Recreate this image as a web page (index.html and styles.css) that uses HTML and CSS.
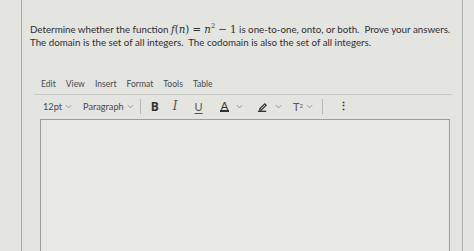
FILE: index.html
```html
<!DOCTYPE html>
<html>
<head>
<meta charset="utf-8">
<link rel="stylesheet" href="styles.css">
</head>
<body>
<div class="panel">
  <div class="question">
    <p>Determine whether the function <span class="math"><i>f</i>(<i>n</i>) = <i>n</i><sup>2</sup> − 1</span> is one-to-one, onto, or both.&nbsp; Prove your answers.</p>
    <p>The domain is the set of all integers.&nbsp; The codomain is also the set of all integers.</p>
  </div>
  <div class="menu">
    <span>Edit</span><span>View</span><span>Insert</span><span>Format</span><span>Tools</span><span>Table</span>
  </div>
  <div class="toolbar">
    <span class="drop size">12pt <svg class="chev" viewBox="0 0 8 5"><path d="M1 1l3 3 3-3"/></svg></span>
    <span class="drop para">Paragraph <svg class="chev" viewBox="0 0 8 5"><path d="M1 1l3 3 3-3"/></svg></span>
    <span class="vsep"></span>
    <span class="btn bold">B</span>
    <span class="btn ital">I</span>
    <span class="btn under">U</span>
    <span class="btn color"><span class="a">A</span><svg class="chev" viewBox="0 0 8 5"><path d="M1 1l3 3 3-3"/></svg></span>
    <span class="btn hl"><svg class="pen" viewBox="0 0 12 12"><path d="M3 8.5l5.5-5.5 1.5 1.5-5.5 5.5H3z" fill="none" stroke="#333" stroke-width="1.3"/><rect x="1" y="10.5" width="9" height="1.5" fill="#333"/></svg><svg class="chev" viewBox="0 0 8 5"><path d="M1 1l3 3 3-3"/></svg></span>
    <span class="btn sup">T<sup>2</sup><svg class="chev" viewBox="0 0 8 5"><path d="M1 1l3 3 3-3"/></svg></span>
    <span class="vsep"></span>
    <span class="btn more">⋮</span>
  </div>
  <div class="editor"></div>
</div>
</body>
</html>
```
FILE: styles.css
```css
html, body {
  margin: 0;
  padding: 0;
  height: 100%;
  overflow: hidden;
}
body {
  background: #e4e4e1;
  font-family: Lato, "Open Sans", sans-serif;
  color: #2f2f2f;
}
.panel {
  margin-left: 21px;
  width: 442px;
  height: 251px;
  border-left: 1px solid #a9a9a7;
  border-right: 1px solid #b3b3b1;
  box-sizing: border-box;
  display: flex;
  flex-direction: column;
}
.question {
  padding: 23px 0 0 8px;
  font-size: 9.75px;
  line-height: 13px;
  white-space: nowrap;
}
.question p {
  margin: 0;
  height: 13px;
}
.math {
  font-family: "DejaVu Serif", "Liberation Serif", serif;
  font-size: 10.2px;
}
.math sup {
  font-size: 6.5px;
  line-height: 0;
  vertical-align: 5px;
}
.menu {
  display: flex;
  gap: 10px;
  margin-top: 29px;
  padding-left: 19px;
  font-size: 8.6px;
  color: #4a4a4a;
  height: 13px;
  line-height: 13px;
}
.toolbar {
  margin-top: 3px;
  margin-left: 12px;
  margin-right: 10px;
  border-top: 1px solid #c9c9c6;
  height: 22px;
  display: flex;
  align-items: center;
  padding-left: 9px;
  font-size: 9.2px;
  color: #4a4a4a;
}
.chev {
  width: 7px;
  height: 5px;
  margin-left: 3px;
  fill: none;
  stroke: #8a8a8a;
  stroke-width: 1;
}
.drop {
  display: flex;
  align-items: center;
}
.size { margin-right: 11px; }
.para { margin-right: 6px; }
.vsep {
  width: 1px;
  height: 15px;
  background: #b8b8b5;
  margin: 0 10px 0 0;
}
.btn {
  display: flex;
  align-items: center;
  color: #333;
}
.bold {
  font-weight: 700;
  font-size: 12px;
  margin-right: 14px;
  font-family: "Open Sans", Lato, sans-serif;
}
.ital {
  font-family: "DejaVu Serif", serif;
  font-style: italic;
  font-size: 12px;
  color: #555;
  margin-right: 17px;
}
.under {
  text-decoration: underline;
  text-underline-offset: 2px;
  font-size: 11px;
  color: #555;
  margin-right: 17px;
}
.color .a {
  font-size: 11px;
  border-bottom: 2px solid #333;
  line-height: 9px;
  padding: 0 1px;
}
.color { margin-right: 14px; }
.color .chev, .hl .chev { margin-left: 7px; }
.pen { width: 11px; height: 11px; }
.hl { margin-right: 11px; }
.sup {
  font-size: 11px;
  color: #555;
  margin-right: 9px;
}
.sup sup {
  font-size: 6px;
  vertical-align: 5px;
  line-height: 0;
}
.sup .chev { margin-left: 3px; }
.more {
  font-size: 11px;
  margin-left: 5px;
  font-weight: 700;
}
.editor {
  margin: 2px 12px 0 18px;
  flex: 1;
  border: 1px solid #9c9c9a;
  border-bottom: none;
  background: #e7e7e4;
}
```
